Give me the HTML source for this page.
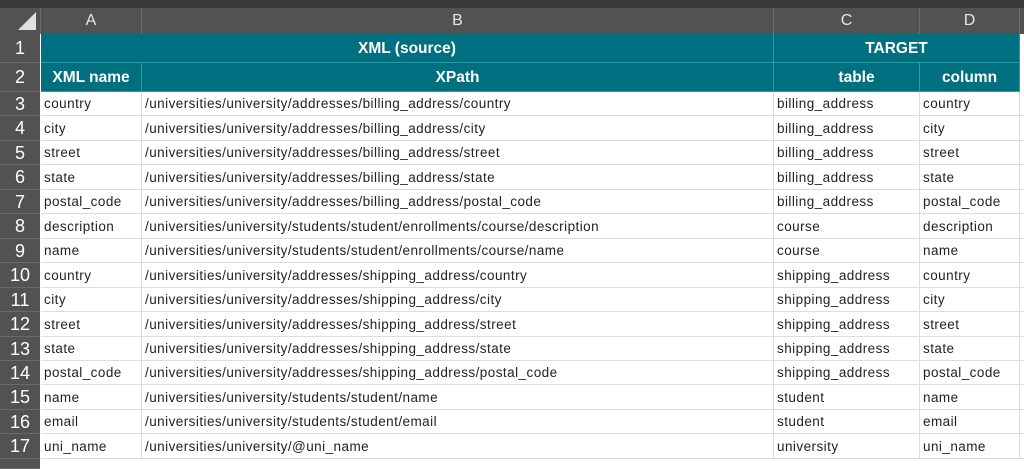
<!DOCTYPE html>
<html><head><style>
body{margin:0;width:1024px;height:462px;overflow:hidden;background:#fff;font-family:"Liberation Sans",sans-serif;position:relative}
.top{position:absolute;left:0;top:0;width:1024px;height:8px;background:#3a3a3a}
.ch{position:absolute;top:8px;height:26px;background:#525252;color:#e6e6e6;font-size:16px;line-height:26px;text-align:center;border-right:1px solid #6a6a6a;box-sizing:border-box}
.rh{position:absolute;left:0;width:40px;background:#525252;color:#fff;font-size:18px;text-align:center;border-bottom:1px solid #6a6a6a;box-sizing:border-box}
.t{position:absolute;background:#007080;color:#fff;font-weight:bold;font-size:15.5px;text-align:center;box-sizing:border-box;border-right:1px solid #2a9aa8;border-bottom:1px solid #2a9aa8}
.c{position:absolute;font-size:13.5px;letter-spacing:0.45px;color:#222;padding-left:3px;box-sizing:border-box;border-right:1px solid #dcdcdc;border-bottom:1px solid #dcdcdc;white-space:nowrap;overflow:hidden}
</style></head><body>
<div class="top"></div>
<div class="ch" style="left:0;width:41px;background:#525252"><svg width="40" height="26" style="position:absolute;left:0;top:0"><polygon points="36,4 36,22 18,22" fill="#e0e0e0"/></svg></div>
<div class="ch" style="left:41px;width:101px">A</div>
<div class="ch" style="left:142px;width:632px">B</div>
<div class="ch" style="left:774px;width:146px">C</div>
<div class="ch" style="left:920px;width:100px">D</div>
<div class="ch" style="left:1020px;width:4px;border:0"></div>
<div class="t" style="left:41px;top:34px;width:733px;height:29px;line-height:29px">XML (source)</div>
<div class="t" style="left:774px;top:34px;width:246px;height:29px;line-height:29px">TARGET</div>
<div class="t" style="left:41px;top:63px;width:101px;height:29px;line-height:29px">XML name</div>
<div class="t" style="left:142px;top:63px;width:632px;height:29px;line-height:29px">XPath</div>
<div class="t" style="left:774px;top:63px;width:146px;height:29px;line-height:29px;padding-left:20px">table</div>
<div class="t" style="left:920px;top:63px;width:100px;height:29px;line-height:29px">column</div>
<div class="rh" style="top:34px;height:29px;line-height:29px">1</div>
<div class="rh" style="top:63px;height:29px;line-height:29px">2</div>
<div id="rows"></div>
<script>
var d=[["country","/universities/university/addresses/billing_address/country","billing_address","country"],
["city","/universities/university/addresses/billing_address/city","billing_address","city"],
["street","/universities/university/addresses/billing_address/street","billing_address","street"],
["state","/universities/university/addresses/billing_address/state","billing_address","state"],
["postal_code","/universities/university/addresses/billing_address/postal_code","billing_address","postal_code"],
["description","/universities/university/students/student/enrollments/course/description","course","description"],
["name","/universities/university/students/student/enrollments/course/name","course","name"],
["country","/universities/university/addresses/shipping_address/country","shipping_address","country"],
["city","/universities/university/addresses/shipping_address/city","shipping_address","city"],
["street","/universities/university/addresses/shipping_address/street","shipping_address","street"],
["state","/universities/university/addresses/shipping_address/state","shipping_address","state"],
["postal_code","/universities/university/addresses/shipping_address/postal_code","shipping_address","postal_code"],
["name","/universities/university/students/student/name","student","name"],
["email","/universities/university/students/student/email","student","email"],
["uni_name","/universities/university/@uni_name","university","uni_name"]];
var xs=[[41,101],[142,632],[774,146],[920,100],[1020,10]],h="";
for(var i=0;i<d.length;i++){var y=92+Math.round(i*24.45),hh=Math.round((i+1)*24.45)-Math.round(i*24.45);
h+='<div class="rh" style="top:'+y+'px;height:'+hh+'px;line-height:'+hh+'px">'+(i+3)+'</div>';
for(var j=0;j<5;j++)h+='<div class="c" style="left:'+xs[j][0]+'px;top:'+y+'px;width:'+xs[j][1]+'px;height:'+hh+'px;line-height:'+hh+'px">'+(d[i][j]||"")+'</div>';}
h+='<div class="rh" style="top:459px;height:10px"></div>';
document.getElementById("rows").innerHTML=h;
</script>
</body></html>
